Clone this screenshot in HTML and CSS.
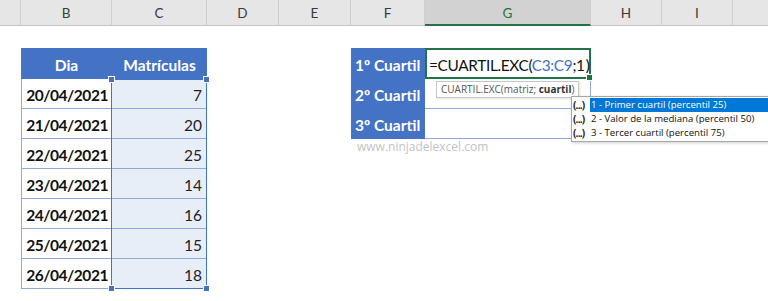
FILE: index.html
```html
<!DOCTYPE html>
<html lang="es">
<head>
<meta charset="utf-8">
<title>Cuartil</title>
<link rel="stylesheet" href="styles.css">
</head>
<body>
<div class="sheet">
  <div class="hd h1"></div>
  <div class="hd h2">B</div>
  <div class="hd h3">C</div>
  <div class="hd h4">D</div>
  <div class="hd h5">E</div>
  <div class="hd h6">F</div>
  <div class="hd h7 active">G</div>
  <div class="hd h8">H</div>
  <div class="hd h9">I</div>
  <div class="hd h10"></div>

  <div class="th cb r2">Dia</div>
  <div class="th cc r2">Matrículas</div>

  <div class="date cb r3">20/04/2021</div><div class="num cc r3">7</div>
  <div class="date cb r4">21/04/2021</div><div class="num cc r4">20</div>
  <div class="date cb r5">22/04/2021</div><div class="num cc r5">25</div>
  <div class="date cb r6">23/04/2021</div><div class="num cc r6">14</div>
  <div class="date cb r7">24/04/2021</div><div class="num cc r7">16</div>
  <div class="date cb r8">25/04/2021</div><div class="num cc r8">15</div>
  <div class="date cb r9">26/04/2021</div><div class="num cc r9">18</div>

  <div class="sel">
    <span class="hdl tl"></span><span class="hdl tr"></span>
    <span class="hdl bl"></span><span class="hdl br"></span>
  </div>

  <div class="q cf r2">1º Cuartil</div>
  <div class="q cf r3">2º Cuartil</div>
  <div class="q cf r4">3º Cuartil</div>

  <div class="formula cg r2"><span class="ftext">=CUARTIL.EXC(<span class="ref">C3:C9</span>;1</span><span class="caret"></span><span class="ftext">)</span><span class="fill"></span></div>
  <div class="gcell cg r3"></div>
  <div class="gcell cg r4"></div>

  <div class="tip">CUARTIL.EXC(matriz; <b>cuartil</b>)</div>

  <ul class="list">
    <li class="item on"><span class="ico">(...)</span><span class="txt">1 - Primer cuartil (percentil 25)</span></li>
    <li class="item"><span class="ico">(...)</span><span class="txt">2 - Valor de la mediana (percentil 50)</span></li>
    <li class="item"><span class="ico">(...)</span><span class="txt">3 - Tercer cuartil (percentil 75)</span></li>
  </ul>

  <div class="mark">www.ninjadelexcel.com</div>
</div>
</body>
</html>
```
FILE: styles.css
```css
html, body { margin: 0; padding: 0; background: #fff; }
body { width: 768px; height: 301px; overflow: hidden; font-family: Lato, "Open Sans", sans-serif; }

.sheet {
  position: relative;
  display: grid;
  grid-template-columns: 21px 91px 95px 72px 72px 74px 166px 71px 71px 35px;
  grid-template-rows: 26px 22px 31px repeat(7, 30px) 1fr;
  width: 768px;
  height: 301px;
}

/* column headers */
.hd {
  grid-row: 1;
  background: #e6e6e6;
  border-bottom: 1px solid #c4c4c4;
  border-right: 1px solid #cfcfcf;
  display: flex; align-items: center; justify-content: center;
  font-size: 13.5px; color: #3a3a3a;
  box-sizing: border-box;
  padding-top: 1px;
}
.h1 { grid-column: 1; } .h2 { grid-column: 2; } .h3 { grid-column: 3; }
.h4 { grid-column: 4; } .h5 { grid-column: 5; } .h6 { grid-column: 6; }
.h7 { grid-column: 7; } .h8 { grid-column: 8; } .h9 { grid-column: 9; }
.h10 { grid-column: 10; border-right: 0; }
.hd.active { background: #d2d2d2; color: #217346; border-bottom: 2px solid #217346; }

.cb { grid-column: 2; } .cc { grid-column: 3; }
.cf { grid-column: 6; } .cg { grid-column: 7; }
.r2 { grid-row: 3; } .r3 { grid-row: 4; } .r4 { grid-row: 5; }
.r5 { grid-row: 6; } .r6 { grid-row: 7; } .r7 { grid-row: 8; }
.r8 { grid-row: 9; } .r9 { grid-row: 10; }

.th {
  background: #4472c4; color: #fff; font-weight: 700; font-size: 15.5px;
  display: flex; align-items: flex-end; justify-content: center;
  padding-bottom: 5px; box-sizing: border-box;
}
.date {
  font-weight: 700; font-size: 15.5px; color: #111; letter-spacing: -0.45px;
  border-left: 1px solid #8eaadb; border-bottom: 1px solid #8eaadb;
  display: flex; align-items: flex-end; justify-content: flex-end;
  padding: 0 4px 4px 0; box-sizing: border-box;
}
.num {
  background: #e8eef8; font-size: 15.5px; color: #222;
  border-bottom: 1px solid #8eaadb;
  display: flex; align-items: flex-end; justify-content: flex-end;
  padding: 0 5px 4px 0; box-sizing: border-box;
}
.sel {
  grid-column: 3; grid-row: 4 / 11;
  position: relative;
  margin-left: -1px;
  border: 1.5px solid #4472c4;
  box-sizing: border-box;
}
.hdl { position: absolute; width: 5px; height: 5px; background: #4472c4; border: 1px solid #fff; }
.tl { left: -4px; top: -4px; } .tr { right: -4px; top: -4px; }
.bl { left: -4px; bottom: -4px; } .br { right: -4px; bottom: -4px; }

.q {
  background: #4472c4; color: #fff; font-weight: 700; font-size: 15.5px;
  display: flex; align-items: flex-end; padding: 0 0 5px 4px; box-sizing: border-box;
}
.formula {
  position: relative;
  border: 2px solid #217346; box-sizing: border-box;
  font-size: 15.4px; letter-spacing: -0.35px; color: #111;
  display: flex; align-items: center; padding-left: 2px; padding-top: 2px;
  white-space: nowrap;
}
.ref { color: #4472c4; }
.caret { display: inline-block; width: 1px; height: 19px; background: #000; margin: 0 0.5px; }
.fill { position: absolute; right: -4px; bottom: -4px; width: 5px; height: 5px; background: #217346; border: 1px solid #fff; }
.gcell { border-bottom: 1px solid #8eaadb; border-right: 1px solid #8eaadb; }

.tip {
  position: absolute; left: 436px; top: 81px;
  height: 15px; padding: 0 4px;
  background: #fff; border: 1px solid #c6c6c6;
  box-shadow: 1px 1px 2px rgba(0,0,0,0.12);
  font-family: "Open Sans", sans-serif; font-size: 10px; line-height: 15px; color: #555;
  white-space: nowrap;
}
.tip b { color: #333; }

.list {
  position: absolute; left: 571px; top: 96px; width: 195px;
  margin: 0; padding: 1px; list-style: none;
  background: #fff; border: 1px solid #a6a6a6;
  box-shadow: 1px 1px 3px rgba(0,0,0,0.2);
}
.item { display: flex; height: 14px; align-items: center; font-family: "Open Sans", sans-serif; font-size: 9.6px; color: #111; white-space: nowrap; }
.ico { flex: 0 0 17px; width: 17px; font-weight: 700; font-size: 10px; letter-spacing: -0.8px; color: #222; }
.txt { flex: 1; padding-left: 1px; line-height: 14px; overflow: hidden; }
.item.on .txt { background: #0078d7; color: #fff; }

.mark {
  position: absolute; left: 357px; top: 138px;
  font-family: "Open Sans", sans-serif; font-size: 12px; color: #c3c3c3;
}
```
